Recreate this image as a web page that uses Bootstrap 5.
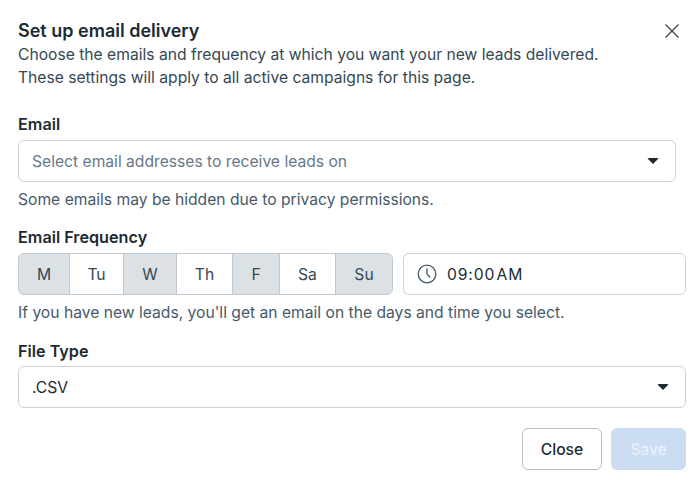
<!DOCTYPE html>
<html lang="en">
<head>
<meta charset="utf-8">
<title>Set up email delivery</title>
<link href="https://cdn.jsdelivr.net/npm/bootstrap@5.3.0/dist/css/bootstrap.min.css" rel="stylesheet">
<style>
html,body{height:100%;}
body{font-family:Inter,"Liberation Sans",sans-serif;background:#fff;color:#1c2b33;overflow:hidden;}
.sheet{width:700px;height:485px;padding:20px 14px 0 18px;}
.head-row{height:22px;}
.ttl{font-size:18px;font-weight:600;line-height:22px;margin:0;color:#1c2b33;}
.x-btn{border:0;background:none;padding:0;line-height:0;margin-right:7px;margin-top:0;}
.desc{font-size:15.65px;line-height:23px;color:#344854;margin:1px 0 0;}
.desc .tail{letter-spacing:.05px;}
.fld-label{font-size:16.2px;font-weight:600;line-height:20px;margin:0 0 6px;color:#1c2b33;display:block;}
.lbl-a{margin-top:25px;}
.lbl-b{margin-top:17px;}
.lbl-c{margin-top:18px;margin-bottom:5px;}
.pick{height:42px;border:1px solid #cbd2d9;border-radius:6px;background:#fff;padding:2px 13px 0;font-size:15.65px;color:#1c2b33;}
.pick.ph{color:#67788a;margin-right:10px;}
.arrow{width:0;height:0;border-left:6px solid transparent;border-right:6px solid transparent;border-top:6px solid #1c2b33;border-radius:2px;margin-right:3px;margin-top:-2px;}
.hint{font-size:15.65px;line-height:20px;color:#465a69;margin:8px 0 0;}
.days{width:375px;height:42px;flex:none;}
.days .btn{font-size:15.65px;font-weight:400;padding:2px 0 0;color:#344854;background:#fff;border:1px solid #c1cad2;flex:none;}
.days .btn.on{background:#dce1e6;}
.days .w1{width:52px}.days .w2{width:55px}.days .w3{width:54px}.days .w4{width:57px}.days .w5{width:48px}.days .w6{width:57px}.days .w7{width:58px}
.days .btn:not(:first-child){margin-left:-1px;}
.time{flex:1;margin-left:10px;height:42px;border:1px solid #cbd2d9;border-radius:6px;padding:0 13px;font-size:15.65px;color:#1c2b33;}
.time span{margin-left:10px;padding-top:2px;word-spacing:-4px;letter-spacing:.9px;}
.act{font-size:15.65px;font-weight:500;height:42px;border-radius:6px;padding:1px 0 0;}
.act.cl{width:80px;background:#fff;border:1px solid #b5bfc8;color:#1c2b33;}
.act.sv{width:75px;background:#cbddf3;border:1px solid #cbddf3;color:#e9f1fa;opacity:1;margin-left:9px;}
.foot{margin-top:20px;}
</style>
</head>
<body>
<div class="sheet">
  <div class="head-row d-flex justify-content-between align-items-center">
    <h1 class="ttl">Set up email delivery</h1>
    <button class="x-btn" type="button" aria-label="Close">
      <svg width="14" height="14" viewBox="0 0 14 14"><path d="M.5.5l13 13M13.5.5l-13 13" stroke="#344854" stroke-width="1.3" fill="none"/></svg>
    </button>
  </div>
  <p class="desc">Choose the emails and frequency at which you want your new leads delivered.<br>These settings will apply to all active campaigns for this page.</p>

  <label class="fld-label lbl-a">Email</label>
  <div class="pick ph d-flex align-items-center justify-content-between">
    <span>Select email addresses to receive leads on</span><i class="arrow"></i>
  </div>
  <p class="hint">Some emails may be hidden due to privacy permissions.</p>

  <label class="fld-label lbl-b">Email Frequency</label>
  <div class="d-flex">
    <div class="btn-group days" role="group">
      <button type="button" class="btn on w1">M</button>
      <button type="button" class="btn w2">Tu</button>
      <button type="button" class="btn on w3">W</button>
      <button type="button" class="btn w4">Th</button>
      <button type="button" class="btn on w5">F</button>
      <button type="button" class="btn w6">Sa</button>
      <button type="button" class="btn on w7">Su</button>
    </div>
    <div class="time d-flex align-items-center">
      <svg width="20" height="20" viewBox="0 0 20 20"><circle cx="10" cy="10" r="8.8" fill="none" stroke="#465a69" stroke-width="1.3"/><path d="M10 4.8V10l2.8 3" fill="none" stroke="#465a69" stroke-width="1.3" stroke-linecap="round"/></svg>
      <span>09:00 AM</span>
    </div>
  </div>
  <p class="hint">If you have new leads, you'll get an email on the days and time you select.</p>

  <label class="fld-label lbl-c">File Type</label>
  <div class="pick d-flex align-items-center justify-content-between">
    <span>.CSV</span><i class="arrow"></i>
  </div>

  <div class="foot d-flex justify-content-end">
    <button type="button" class="btn act cl">Close</button>
    <button type="button" class="btn act sv" disabled>Save</button>
  </div>
</div>
</body>
</html>
